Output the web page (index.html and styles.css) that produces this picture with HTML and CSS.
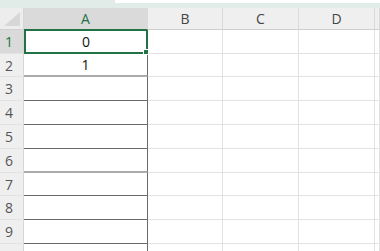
FILE: index.html
```html
<!DOCTYPE html>
<html lang="en">
<head>
    <meta charset="UTF-8">
    <title>Sheet1</title>
    <link rel="stylesheet" href="styles.css">
</head>
<body>

    <div class="topbar"><div class="topbar-box"></div></div>

    <div class="sheet">
        <div class="row head">
            <div class="corner"><div class="corner-tri"></div></div>
            <div class="col-head active">A</div>
            <div class="col-head">B</div>
            <div class="col-head">C</div>
            <div class="col-head">D</div>
            <div class="col-head"></div>
        </div>

        <div class="row">
            <div class="row-head active">1</div>
            <div class="cell col-a selected">0</div>
            <div class="cell"></div><div class="cell"></div><div class="cell"></div><div class="cell"></div>
        </div>
        <div class="row short">
            <div class="row-head">2</div>
            <div class="cell col-a light">1</div>
            <div class="cell"></div><div class="cell"></div><div class="cell"></div><div class="cell"></div>
        </div>
        <div class="row">
            <div class="row-head">3</div>
            <div class="cell col-a"></div>
            <div class="cell"></div><div class="cell"></div><div class="cell"></div><div class="cell"></div>
        </div>
        <div class="row">
            <div class="row-head">4</div>
            <div class="cell col-a"></div>
            <div class="cell"></div><div class="cell"></div><div class="cell"></div><div class="cell"></div>
        </div>
        <div class="row">
            <div class="row-head">5</div>
            <div class="cell col-a"></div>
            <div class="cell"></div><div class="cell"></div><div class="cell"></div><div class="cell"></div>
        </div>
        <div class="row">
            <div class="row-head">6</div>
            <div class="cell col-a light"></div>
            <div class="cell"></div><div class="cell"></div><div class="cell"></div><div class="cell"></div>
        </div>
        <div class="row short">
            <div class="row-head">7</div>
            <div class="cell col-a"></div>
            <div class="cell"></div><div class="cell"></div><div class="cell"></div><div class="cell"></div>
        </div>
        <div class="row">
            <div class="row-head">8</div>
            <div class="cell col-a"></div>
            <div class="cell"></div><div class="cell"></div><div class="cell"></div><div class="cell"></div>
        </div>
        <div class="row">
            <div class="row-head">9</div>
            <div class="cell col-a"></div>
            <div class="cell"></div><div class="cell"></div><div class="cell"></div><div class="cell"></div>
        </div>
        <!-- row 10, only its top edge shows -->
        <div class="row">
            <div class="row-head"></div>
            <div class="cell col-a"></div>
            <div class="cell"></div><div class="cell"></div><div class="cell"></div><div class="cell"></div>
        </div>
    </div>

</body>
</html>
```

FILE: styles.css
```css
body {
    margin: 0;
    background: #ffffff;
    font-family: "Open Sans", "Noto Sans", Arial, sans-serif;
    overflow: hidden;
}
.topbar {
    height: 8px;
    background: #e1ebe7;
}
.topbar-box {
    margin-left: 115px;
    height: 3px;
    background: #ffffff;
}
.row {
    display: grid;
    grid-template-columns: 24px 124px 75px 76px 76px 1fr;
    height: 24px;
}
.row.short {
    height: 23px;
}
.row.head {
    height: 22px;
}
.row > div {
    box-sizing: border-box;
}
.corner {
    position: relative;
    background: #ededed;
    border-right: 1px solid #d6d6d6;
    border-bottom: 1px solid #d0d0d0;
}
.corner-tri {
    position: absolute;
    right: 3px;
    bottom: 3px;
    width: 0;
    height: 0;
    border-left: 16px solid transparent;
    border-bottom: 14px solid #d7d7d7;
}
.col-head {
    background: #efefef;
    border-right: 1px solid #d9d9d9;
    border-bottom: 1px solid #cfcfcf;
    color: #444444;
    font-size: 14px;
    line-height: 21px;
    text-align: center;
}
.col-head.active {
    background: #dadada;
    color: #217346;
    border-bottom: 1px solid #217346;
}
.row-head {
    background: #efefef;
    border-right: 1px solid #d6d6d6;
    border-bottom: 1px solid #e2e2e2;
    color: #555555;
    font-size: 14px;
    padding-left: 5px;
    display: flex;
    align-items: center;
}
.row-head.active {
    background: #dadada;
    color: #217346;
}
.cell {
    border-right: 1px solid #e2e2e2;
    border-bottom: 1px solid #e2e2e2;
    font-size: 14px;
    color: #111111;
    display: flex;
    align-items: center;
    justify-content: center;
}
.cell.col-a {
    border-right: 1px solid #6a6a6a;
    border-bottom: 1px solid #6a6a6a;
}
.cell.col-a.light {
    border-bottom: 2px solid #ababab;
}
.cell.selected {
    position: relative;
    border: 2px solid #217346;
    border-top: 1px solid #217346;
}
.cell.selected::after {
    content: "";
    position: absolute;
    right: -3px;
    bottom: -3px;
    width: 4px;
    height: 4px;
    background: #217346;
    border: 1px solid #ffffff;
}
```
